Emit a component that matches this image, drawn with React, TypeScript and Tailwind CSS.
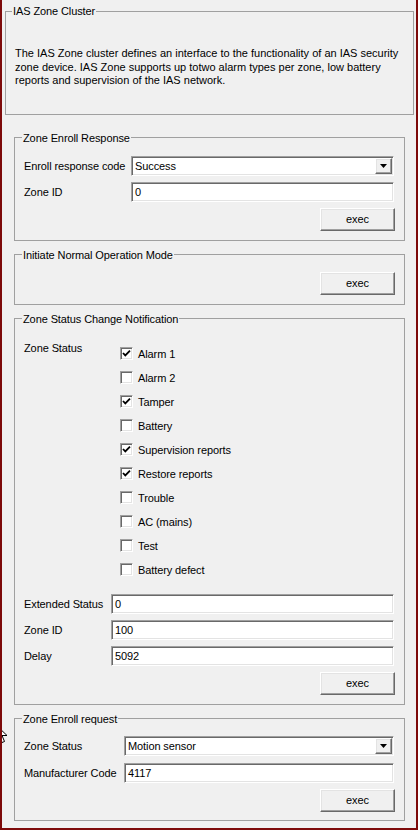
import React from "react";

const sunken =
  "border border-t-[#a0a0a0] border-l-[#a0a0a0] border-b-white border-r-white shadow-[inset_1px_1px_0_#696969,inset_-1px_-1px_0_#e3e3e3]";
const raised =
  "border border-t-white border-l-white border-b-[#696969] border-r-[#696969] shadow-[inset_-1px_-1px_0_#a0a0a0,inset_1px_1px_0_#e3e3e3]";

function Group({
  legend,
  className,
  legendClass,
  children,
}: {
  legend: string;
  className?: string;
  legendClass?: string;
  children: React.ReactNode;
}) {
  return (
    <fieldset className={"border border-[#a0a0a0] min-w-0 " + (className ?? "")}>
      <legend className={"px-px leading-[14px] " + (legendClass ?? "ml-[7px]")}>{legend}</legend>
      {children}
    </fieldset>
  );
}

function TextBox({ value, className }: { value: string; className?: string }) {
  return (
    <div className={"flex-1 h-[20px] bg-white flex items-center pl-[3px] " + sunken + " " + (className ?? "")}>
      <span className="leading-[14px]">{value}</span>
    </div>
  );
}

function Select({ value }: { value: string }) {
  return (
    <div className={"flex-1 h-[20px] bg-white flex items-center pl-[3px] " + sunken}>
      <span className="flex-1 leading-[14px]">{value}</span>
      <div className={"w-[17px] h-[16px] mr-px bg-[#f0f0f0] flex items-center justify-center " + raised}>
        <svg width="7" height="4" viewBox="0 0 7 4">
          <path d="M0 0 H7 L3.5 4 Z" fill="#000" />
        </svg>
      </div>
    </div>
  );
}

function ExecButton() {
  return (
    <div className="flex justify-end -mr-px">
      <button className={"w-[75px] h-[23px] bg-[#f0f0f0] flex items-center justify-center leading-[14px] " + raised}>
        exec
      </button>
    </div>
  );
}

function Check({ label, checked }: { label: string; checked: boolean }) {
  return (
    <div className="h-[24px] flex items-center">
      <div className={"w-[13px] h-[13px] bg-white flex items-center justify-center " + sunken}>
        {checked && (
          <svg width="9" height="9" viewBox="0 0 9 9">
            <path d="M1 4 L3.3 6.4 L8 1.6" fill="none" stroke="#000" strokeWidth="1.8" />
          </svg>
        )}
      </div>
      <span className="ml-[5px] leading-[14px]">{label}</span>
    </div>
  );
}

export default function App() {
  const checks: [string, boolean][] = [
    ["Alarm 1", true],
    ["Alarm 2", false],
    ["Tamper", true],
    ["Battery", false],
    ["Supervision reports", true],
    ["Restore reports", true],
    ["Trouble", false],
    ["AC (mains)", false],
    ["Test", false],
    ["Battery defect", false],
  ];
  return (
    <div className="relative w-[418px] h-[830px] overflow-hidden bg-[#f0f0f0] border-x-2 border-b-2 border-[#7d0a0a] text-[11px] text-black font-['Liberation_Sans',Arial,sans-serif] tracking-[-0.1px]">
      <Group legend="IAS Zone Cluster" legendClass="ml-[6px]" className="mt-[4px] ml-[3px] mr-[2px]">
        <div className="pl-[9px] pt-[29px] pb-[26px] leading-[13.5px] tracking-[0px]">
          The IAS Zone cluster defines an interface to the functionality of an IAS security
          <br />
          zone device. IAS Zone supports up totwo alarm types per zone, low battery
          <br />
          reports and supervision of the IAS network.
        </div>
      </Group>

      <div className="ml-[12px] mr-[11px]">
        <Group legend="Zone Enroll Response" className="mt-[16px]">
          <div className="pl-[9px] pr-[10px] pt-[11px] pb-[9px]">
            <div className="flex items-center">
              <span className="w-[107px] leading-[14px]">Enroll response code</span>
              <Select value="Success" />
            </div>
            <div className="flex items-center mt-[6px]">
              <span className="w-[107px] leading-[14px]">Zone ID</span>
              <TextBox value="0" />
            </div>
            <div className="mt-[6px]">
              <ExecButton />
            </div>
          </div>
        </Group>

        <Group legend="Initiate Normal Operation Mode" className="mt-[7px]">
          <div className="pl-[9px] pr-[10px] pt-[10px] pb-[9px]">
            <ExecButton />
          </div>
        </Group>

        <Group legend="Zone Status Change Notification" className="mt-[7px]">
          <div className="pl-[9px] pr-[10px] pt-[16px] pb-[9px]">
            <div className="flex">
              <span className="w-[96px] -mt-px leading-[14px]">Zone Status</span>
              <div className="flex flex-col">
                {checks.map(([l, c]) => (
                  <Check key={l} label={l} checked={c} />
                ))}
              </div>
            </div>
            <div className="flex items-center mt-[12px]">
              <span className="w-[87px] leading-[14px]">Extended Status</span>
              <TextBox value="0" />
            </div>
            <div className="flex items-center mt-[6px]">
              <span className="w-[87px] leading-[14px]">Zone ID</span>
              <TextBox value="100" />
            </div>
            <div className="flex items-center mt-[6px]">
              <span className="w-[87px] leading-[14px]">Delay</span>
              <TextBox value="5092" />
            </div>
            <div className="mt-[6px]">
              <ExecButton />
            </div>
          </div>
        </Group>

        <Group legend="Zone Enroll request" className="mt-[7px]">
          <div className="pl-[9px] pr-[10px] pt-[10px] pb-[8px]">
            <div className="flex items-center">
              <span className="w-[100px] leading-[14px]">Zone Status</span>
              <Select value="Motion sensor" />
            </div>
            <div className="flex items-center mt-[7px]">
              <span className="w-[100px] leading-[14px]">Manufacturer Code</span>
              <TextBox value="4117" />
            </div>
            <div className="mt-[6px]">
              <ExecButton />
            </div>
          </div>
        </Group>
      </div>

      <svg
        className="absolute left-[-7px] top-[724px]"
        width="13"
        height="20"
        viewBox="0 0 13 20"
      >
        <path
          d="M0.5 0.5 L0.5 16.5 L4.5 12.5 L7 18.5 L9.5 17.5 L7 11.5 L12 11.5 Z"
          fill="#fff"
          stroke="#000"
          strokeWidth="1"
        />
      </svg>
    </div>
  );
}
